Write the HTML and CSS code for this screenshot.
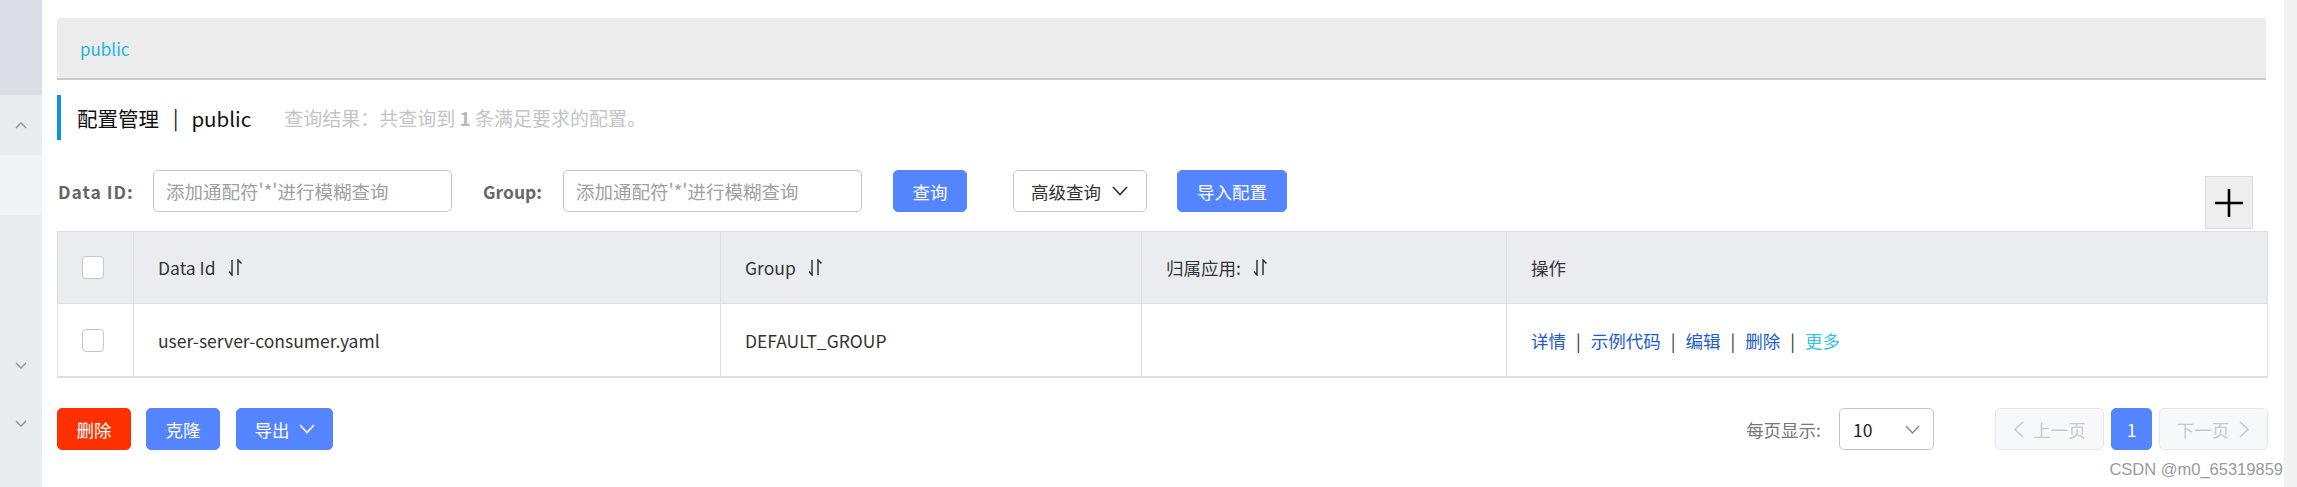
FILE: index.html
```html
<!DOCTYPE html>
<html lang="zh-CN">
<head>
<meta charset="utf-8">
<title>配置管理</title>
<link rel="stylesheet" href="styles.css">
</head>
<body>
<div class="app">
  <aside class="side">
    <div class="side-top"></div>
    <div class="side-item">
      <svg class="side-chev" width="12" height="7" viewBox="0 0 12 7"><polyline points="1,6 6,1 11,6"/></svg>
    </div>
    <div class="side-active"></div>
    <div class="side-rest">
      <div class="side-row first">
        <svg class="side-chev" width="12" height="7" viewBox="0 0 12 7"><polyline points="1,1 6,6 11,1"/></svg>
      </div>
      <div class="side-row">
        <svg class="side-chev" width="12" height="7" viewBox="0 0 12 7"><polyline points="1,1 6,6 11,1"/></svg>
      </div>
    </div>
  </aside>

  <main class="main">
    <div class="crumb"><span class="crumb-link">public</span></div>

    <div class="title">
      <span class="title-main">配置管理</span>
      <span class="title-sep">|</span>
      <span class="title-ns">public</span>
      <span class="title-summary">查询结果：共查询到 <b>1</b> 条满足要求的配置。</span>
    </div>

    <div class="search">
      <label class="lbl lbl-id">Data ID:</label>
      <input class="field" placeholder="添加通配符'*'进行模糊查询">
      <label class="lbl lbl-group">Group:</label>
      <input class="field" placeholder="添加通配符'*'进行模糊查询">
      <button class="btn btn-primary btn-query">查询</button>
      <button class="btn btn-normal btn-adv">高级查询<svg class="chev-down" width="16" height="10" viewBox="0 0 16 10"><polyline points="1,1 8,8.5 15,1"/></svg></button>
      <button class="btn btn-primary btn-import">导入配置</button>
      <button class="btn-add"><svg width="30" height="30" viewBox="0 0 30 30"><path d="M15 1V29M1 15H29"/></svg></button>
    </div>

    <div class="table">
      <div class="tr th">
        <div class="td td-check"><span class="checkbox"></span></div>
        <div class="td">Data Id<svg class="sort" width="14" height="17" viewBox="0 0 14 17"><path d="M4 1V16L1 12.5M10 16V1L13.5 4.5"/></svg></div>
        <div class="td">Group<svg class="sort" width="14" height="17" viewBox="0 0 14 17"><path d="M4 1V16L1 12.5M10 16V1L13.5 4.5"/></svg></div>
        <div class="td">归属应用:<svg class="sort" width="14" height="17" viewBox="0 0 14 17"><path d="M4 1V16L1 12.5M10 16V1L13.5 4.5"/></svg></div>
        <div class="td">操作</div>
      </div>
      <div class="tr">
        <div class="td td-check"><span class="checkbox"></span></div>
        <div class="td">user-server-consumer.yaml</div>
        <div class="td">DEFAULT_GROUP</div>
        <div class="td"></div>
        <div class="td ops">
          <a class="op">详情</a><span class="op-sep">|</span><a class="op">示例代码</a><span class="op-sep">|</span><a class="op">编辑</a><span class="op-sep">|</span><a class="op">删除</a><span class="op-sep">|</span><a class="op op-more">更多</a>
        </div>
      </div>
    </div>

    <div class="footer">
      <div class="batch">
        <button class="btn btn-danger btn-del">删除</button>
        <button class="btn btn-primary btn-clone">克隆</button>
        <button class="btn btn-primary btn-export">导出<svg class="chev-down" width="16" height="10" viewBox="0 0 16 10"><polyline points="1,1 8,8.5 15,1"/></svg></button>
      </div>
      <div class="pager">
        <span class="pager-label">每页显示:</span>
        <div class="select"><span>10</span><svg class="chev-down gray" width="15" height="9" viewBox="0 0 15 9"><polyline points="1,1 7.5,8 14,1"/></svg></div>
        <button class="pg pg-disabled pg-prev"><svg class="pg-chev" width="11" height="17" viewBox="0 0 11 17"><polyline points="10,1 2,8.5 10,16"/></svg>上一页</button>
        <button class="pg pg-current">1</button>
        <button class="pg pg-disabled pg-next">下一页<svg class="pg-chev" width="11" height="17" viewBox="0 0 11 17"><polyline points="1,1 9,8.5 1,16"/></svg></button>
      </div>
    </div>
  </main>

  <div class="scrollbar"></div>
  <div class="watermark">CSDN @m0_65319859</div>
</div>
</body>
</html>
```

FILE: styles.css
```css
* { box-sizing: border-box; }

html, body {
  margin: 0;
  padding: 0;
  height: 100%;
  background: #fff;
}

body {
  font-family: "Noto Sans CJK SC", "Noto Sans", sans-serif;
  font-size: 17.5px;
  color: #333;
  overflow: hidden;
}

.app {
  position: relative;
  display: flex;
  height: 487px;
}

/* sidebar */
.side {
  width: 42px;
  flex: 0 0 42px;
  display: flex;
  flex-direction: column;
  background: #e9ebef;
}
.side-top { height: 95px; background: #dadee4; }
.side-item {
  height: 60px;
  background: #e9ebef;
  display: flex;
  align-items: center;
  justify-content: center;
}
.side-active { height: 60px; background: #f2f3f6; }
.side-rest { flex: 1; display: flex; flex-direction: column; }
.side-row {
  height: 58px;
  display: flex;
  align-items: center;
  justify-content: center;
}
.side-row.first { margin-top: 121px; }
.side-chev polyline { fill: none; stroke: #8c919b; stroke-width: 1.3; }

/* main */
.main {
  flex: 1;
  min-width: 0;
  padding: 18px 16px 0 15px;
}

.crumb {
  height: 62px;
  background: #ececec;
  border-bottom: 2px solid #cbcbcb;
  display: flex;
  align-items: center;
  padding-left: 23px;
  margin-right: 2px;
}
.crumb-link { color: #1fb6dd; font-size: 17px; }

.title {
  margin-top: 15px;
  height: 45px;
  border-left: 4px solid #0a97d4;
  display: flex;
  align-items: center;
  padding-left: 16px;
}
.title-main, .title-ns { font-size: 20.5px; color: #111; }
.title-sep { font-size: 20px; color: #111; margin: 0 13px 0 14px; }
.title-summary { margin-left: 33px; color: #c4c4c4; font-size: 19px; }
.title-summary b { color: #b8b8b8; }

/* search bar */
.search {
  margin-top: 30px;
  display: flex;
  align-items: flex-start;
}
.lbl {
  height: 42px;
  display: flex;
  align-items: center;
  font-weight: bold;
  color: #666;
  margin-right: 20px;
  white-space: nowrap;
}
.lbl-id { width: 75px; margin-left: 1px; letter-spacing: 1px; }
.lbl-group { width: 60px; margin-left: 31px; }
.field {
  width: 299px;
  height: 42px;
  border: 1px solid #c4c6cf;
  border-radius: 5px;
  padding: 0 12px;
  font: inherit;
  font-size: 18.5px;
  color: #333;
  outline: none;
}
.field::placeholder { color: #a0a0a0; }

.btn {
  height: 42px;
  border-radius: 5px;
  font: inherit;
  display: inline-flex;
  align-items: center;
  justify-content: center;
  cursor: pointer;
  white-space: nowrap;
}
.btn-primary { background: #5584ff; border: 1px solid #5584ff; color: #fff; }
.btn-danger { background: #ff3000; border: 1px solid #ff3000; color: #fff; }
.btn-normal { background: #fff; border: 1px solid #c4c6cf; color: #333; }

.btn-query { width: 74px; margin-left: 31px; }
.btn-adv { width: 134px; margin-left: 46px; padding: 0 18px 0 17px; justify-content: space-between; }
.btn-import { width: 110px; margin-left: 30px; }

.chev-down { margin-left: 8px; }
.chev-down polyline { fill: none; stroke: #333; stroke-width: 1.6; }
.btn-primary .chev-down polyline { stroke: #fff; }
.chev-down.gray polyline { stroke: #888; stroke-width: 1.4; }

.btn-add {
  margin-left: auto;
  margin-right: 15px;
  margin-top: 6px;
  width: 48px;
  height: 53px;
  background: #eeeeee;
  border: 1px solid #dcdcdc;
  padding: 0;
  display: flex;
  align-items: center;
  justify-content: center;
}
.btn-add path { stroke: #000; stroke-width: 2.6; fill: none; }

/* table */
.table {
  margin-top: 2px;
  border: 1px solid #dcdee3;
  border-bottom-width: 2px;
}
.tr {
  display: grid;
  grid-template-columns: 75px 587px 421px 365px 1fr;
  height: 72px;
}
.th { background: #ebecf0; border-bottom: 1px solid #dcdee3; height: 72px; }
.td {
  display: flex;
  align-items: center;
  padding-left: 24px;
  border-left: 1px solid #dcdee3;
  color: #333;
  white-space: nowrap;
}
.td:first-child { border-left: none; }
.td-check { justify-content: center; padding-left: 0; padding-right: 5px; }
.checkbox {
  width: 22px;
  height: 23px;
  border: 1px solid #c4c6cf;
  border-radius: 4px;
  background: #fff;
}
.sort { margin-left: 12px; }
.sort path { fill: none; stroke: #333; stroke-width: 1.5; }

.op { color: #1c5bd0; text-decoration: none; }
.op-more { color: #33c5e6; }
.op-sep { color: #333; margin: 0 10px; }

/* footer */
.footer {
  margin-top: 30px;
  display: flex;
  align-items: center;
  justify-content: space-between;
}
.batch { display: flex; }
.btn-del { width: 74px; }
.btn-clone { width: 74px; margin-left: 15px; }
.btn-export { width: 97px; margin-left: 16px; padding: 0 17px; }
.btn-export .chev-down { margin-left: 9px; }

.pager { display: flex; align-items: center; }
.pager-label { color: #777; margin-right: 18px; }
.select {
  width: 95px;
  height: 42px;
  border: 1px solid #c4c6cf;
  border-radius: 5px;
  display: flex;
  align-items: center;
  justify-content: space-between;
  padding: 0 13px 0 13px;
  color: #222;
}
.pg {
  height: 42px;
  border-radius: 5px;
  font: inherit;
  display: inline-flex;
  align-items: center;
  justify-content: center;
  padding: 0;
}
.pg-disabled { background: #f7f8fa; border: 1px solid #e6e7eb; color: #c8c9ce; width: 109px; }
.pg-prev { margin-left: 61px; }
.pg-prev .pg-chev { margin-right: 9px; }
.pg-next .pg-chev { margin-left: 10px; }
.pg-chev polyline { fill: none; stroke: #c8c9ce; stroke-width: 1.6; }
.pg-current { width: 41px; margin: 0 7px; background: #5584ff; border: 1px solid #5584ff; color: #fff; }

/* scrollbar */
.scrollbar { width: 13px; flex: 0 0 13px; background: #f1f1f1; }

.watermark {
  position: absolute;
  right: 14px;
  bottom: 8px;
  font-family: "Liberation Sans", Arial, sans-serif;
  font-size: 16.5px;
  color: #9a9a9a;
}
```
